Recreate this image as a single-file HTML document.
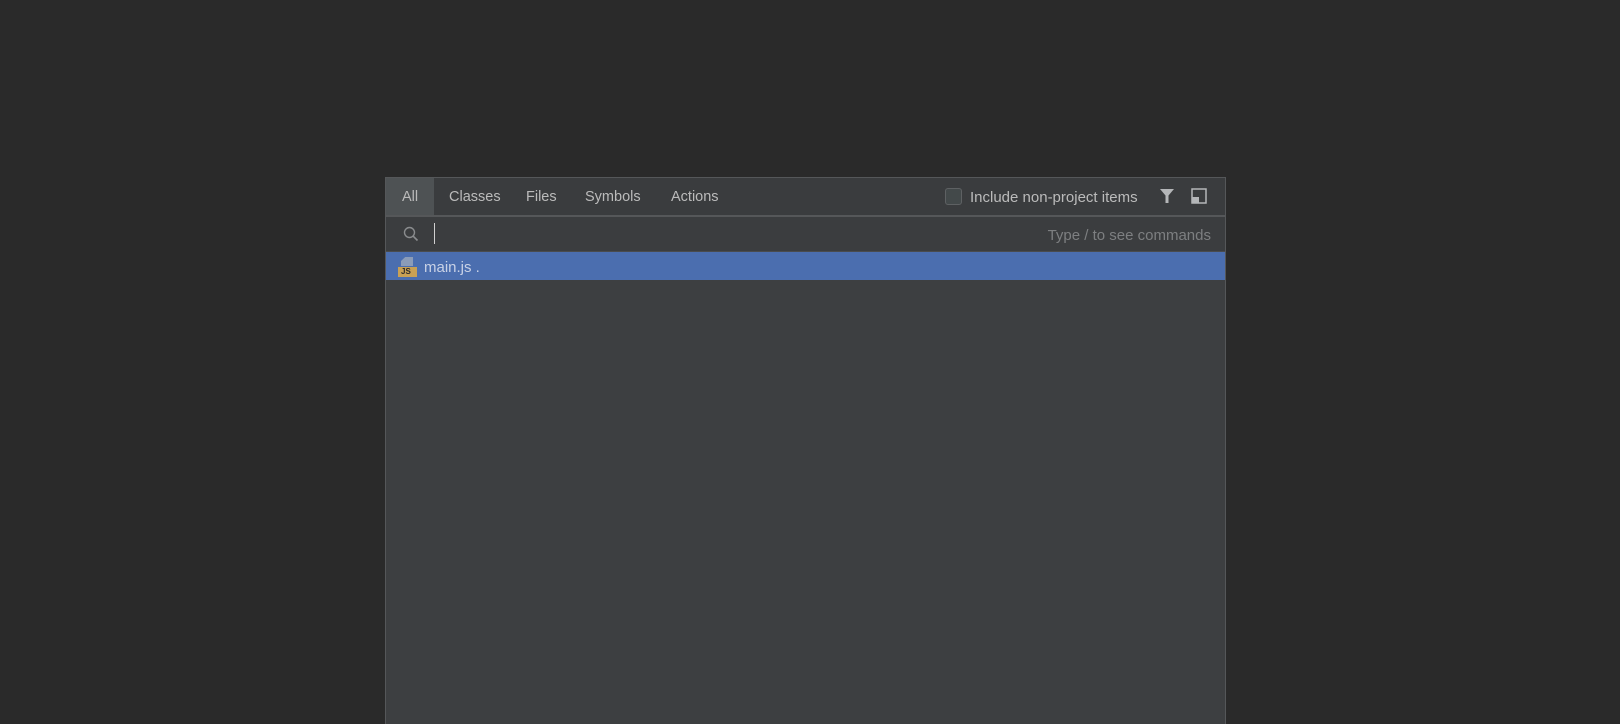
<!DOCTYPE html>
<html><head><meta charset="utf-8"><style>
html,body{margin:0;padding:0;width:1620px;height:724px;overflow:hidden;background:#2a2a2a;font-family:"Liberation Sans",sans-serif;}
#p{position:absolute;left:385px;top:177px;width:841px;height:547px;background:#3d3f41;border:1px solid #555759;border-bottom:none;box-sizing:border-box;overflow:hidden;}
#tabs{position:absolute;left:0;top:0;right:0;height:37px;background:#3a3c3e;border-bottom:2px solid #555759;}
.t{position:absolute;top:0;height:37px;line-height:39px;font-size:14.5px;color:#bbbbbb;}
#all{left:0;width:48px;background:#4e5254;text-align:center;}
#search{position:absolute;left:0;right:0;top:39px;height:34px;background:#3b3d3f;border-bottom:1px solid #4a4c4e;}
#row{position:absolute;left:0;right:0;top:74px;height:28px;background:#4b6eaf;}
</style></head><body>
<div id="p">
 <div id="tabs">
  <div class="t" id="all">All</div>
  <div class="t" style="left:63px">Classes</div>
  <div class="t" style="left:140px">Files</div>
  <div class="t" style="left:199px">Symbols</div>
  <div class="t" style="left:285px">Actions</div>
  <div style="position:absolute;left:559px;top:10px;width:15px;height:15px;border:1px solid #5e6163;border-radius:3px;background:#43494a"></div>
  <div class="t" style="left:584px;font-size:15px;line-height:39px">Include non-project items</div>
  <svg style="position:absolute;left:773px;top:10px" width="16" height="16" viewBox="0 0 16 16"><path d="M1 1H15L9.5 7.5V15H6.5V7.5Z" fill="#b4b6b8"/></svg>
  <svg style="position:absolute;left:805px;top:10px" width="16" height="16" viewBox="0 0 16 16"><rect x="1" y="1" width="14" height="14" fill="none" stroke="#b4b6b8" stroke-width="1.5"/><rect x="1" y="9" width="7" height="6" fill="#b4b6b8"/></svg>
 </div>
 <div id="search">
  <svg style="position:absolute;left:17px;top:9px" width="16" height="16" viewBox="0 0 16 16"><circle cx="6.5" cy="6.5" r="5" fill="none" stroke="#8a8c8e" stroke-width="1.4"/><path d="M10.2 10.2L14.5 14.5" stroke="#8a8c8e" stroke-width="1.6"/></svg>
  <div style="position:absolute;left:48px;top:6px;width:1px;height:21px;background:#d0d0d0"></div>
  <div style="position:absolute;right:14px;top:2px;line-height:34px;font-size:15px;color:#7d7f81">Type / to see commands</div>
 </div>
 <div id="row">
  <div style="position:absolute;left:15px;top:5px;width:12px;height:9px;background:#8b9cb8;clip-path:polygon(35% 0,100% 0,100% 100%,0 100%,0 45%)"></div>
  <div style="position:absolute;left:12px;top:15px;width:19px;height:10px;background:#c9a154;font-size:8px;font-weight:bold;color:#2b2b2b;line-height:10px;padding-left:3px;box-sizing:border-box">JS</div>
  <div style="position:absolute;left:38px;top:2px;line-height:28px;font-size:15px;color:#c9d2e6">main.js .</div>
 </div>
</div>
</body></html>
